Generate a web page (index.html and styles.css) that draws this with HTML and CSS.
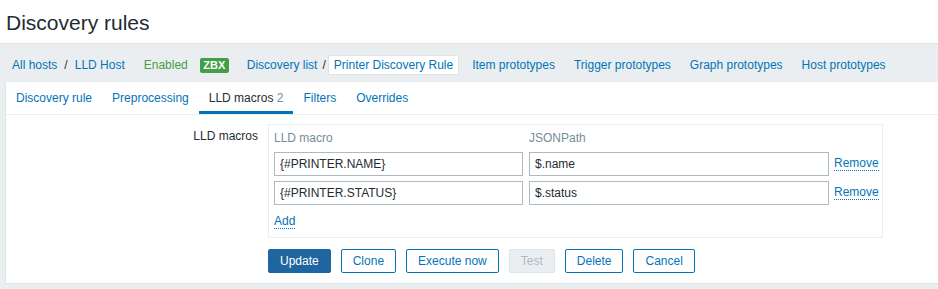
FILE: index.html
```html
<!DOCTYPE html>
<html lang="en">
<head>
<meta charset="utf-8">
<title>Discovery rules</title>
<link rel="stylesheet" href="styles.css">
</head>
<body>
<header class="page-header">
  <h1 class="page-title">Discovery rules</h1>
</header>
<main class="wrapper">
  <nav class="breadcrumbs">
    <a class="link" href="#">All hosts</a>
    <span class="sep">/</span>
    <a class="link" href="#">LLD Host</a>
    <span class="status">Enabled</span>
    <span class="badge">ZBX</span>
    <a class="link crumb-disc" href="#">Discovery list</a>
    <span class="sep sep-tight">/</span>
    <span class="crumb-current">Printer Discovery Rule</span>
    <a class="link nav-item first" href="#">Item prototypes</a>
    <a class="link nav-item" href="#">Trigger prototypes</a>
    <a class="link nav-item" href="#">Graph prototypes</a>
    <a class="link nav-item" href="#">Host prototypes</a>
  </nav>
  <section class="card">
    <ul class="tabs">
      <li class="tab"><a href="#">Discovery rule</a></li>
      <li class="tab"><a href="#">Preprocessing</a></li>
      <li class="tab active"><a href="#">LLD macros <span class="count">2</span></a></li>
      <li class="tab"><a href="#">Filters</a></li>
      <li class="tab"><a href="#">Overrides</a></li>
    </ul>
    <form class="form">
      <div class="form-row">
        <label class="form-label">LLD macros</label>
        <div class="macro-table">
          <div class="macro-grid">
            <div class="col-head">LLD macro</div>
            <div class="col-head">JSONPath</div>
            <div></div>
            <input class="field field-macro" type="text" value="{#PRINTER.NAME}">
            <input class="field field-path" type="text" value="$.name">
            <a class="dotted-link" href="#">Remove</a>
            <input class="field field-macro" type="text" value="{#PRINTER.STATUS}">
            <input class="field field-path" type="text" value="$.status">
            <a class="dotted-link" href="#">Remove</a>
          </div>
          <div class="add-row"><a class="dotted-link" href="#">Add</a></div>
        </div>
      </div>
      <div class="buttons">
        <button type="button" class="btn btn-primary">Update</button>
        <button type="button" class="btn">Clone</button>
        <button type="button" class="btn">Execute now</button>
        <button type="button" class="btn btn-disabled" disabled>Test</button>
        <button type="button" class="btn">Delete</button>
        <button type="button" class="btn">Cancel</button>
      </div>
    </form>
  </section>
</main>
</body>
</html>
```

FILE: styles.css
```css
* { box-sizing: border-box; }

html, body {
  margin: 0;
  padding: 0;
}

body {
  font-family: "Liberation Sans", Arial, sans-serif;
  font-size: 12px;
  color: #1f2c33;
  background: #ebeef0;
}

a { text-decoration: none; }

.page-header {
  background: #ffffff;
  height: 43px;
  padding: 11px 0 0 6px;
}

.page-title {
  margin: 0;
  font-size: 21px;
  font-weight: normal;
  line-height: 24px;
  color: #1f2c33;
}

.wrapper {
  border-top: 1px solid #dfe4e7;
  padding: 0 0 5px 5px;
}

.breadcrumbs {
  display: flex;
  align-items: center;
  padding: 11px 0 7px 7px;
  line-height: 20px;
  white-space: nowrap;
}

.link { color: #0275b8; }

.sep {
  margin: 0 7px;
  color: #1f2c33;
}

.sep-tight { margin: 0 2px 0 5px; }

.status {
  margin-left: 19px;
  color: #429e47;
}

.badge {
  margin-left: 12px;
  height: 15px;
  line-height: 15px;
  padding: 0 3px;
  min-width: 29px;
  text-align: center;
  border-radius: 2px;
  background: #429e47;
  color: #ffffff;
  font-size: 11px;
  font-weight: bold;
}

.crumb-disc { margin-left: 18px; }

.crumb-current {
  height: 20px;
  line-height: 18px;
  padding: 0 5px;
  background: #ffffff;
  border: 1px solid #dfe4e7;
  border-radius: 2px;
  color: #0275b8;
  margin-right: 13px;
}

.nav-item { margin-left: 19px; }
.nav-item.first { margin-left: 0; }

.card {
  background: #ffffff;
  border-left: 1px solid #dfe4e7;
  border-bottom: 1px solid #dfe4e7;
}

.tabs {
  display: flex;
  list-style: none;
  margin: 0;
  padding: 0;
  height: 33px;
  border-bottom: 1px solid #ebeef0;
}

.tab a {
  display: block;
  height: 32px;
  line-height: 32px;
  padding: 0 10px;
  color: #0275b8;
}

.tab.active a {
  color: #1f2c33;
  box-shadow: inset 0 -3px 0 #0275b8;
}

.count { color: #768d99; }

.form {
  padding: 9px 0 10px 0;
}

.form-row {
  display: grid;
  grid-template-columns: 252px 615px;
  column-gap: 10px;
  align-items: start;
}

.form-label {
  text-align: right;
  line-height: 16px;
  padding-top: 4px;
}

.macro-table {
  border: 1px solid #ebeef0;
  padding: 5px 5px 8px 5px;
}

.macro-grid {
  display: grid;
  grid-template-columns: 255px 305px auto;
  row-gap: 5px;
  align-items: center;
}

.col-head {
  color: #768d99;
  line-height: 16px;
  margin-bottom: 1px;
}

.field {
  height: 24px;
  padding: 0 5px;
  border: 1px solid #acbbc2;
  border-radius: 0;
  font-family: "Liberation Sans", Arial, sans-serif;
  font-size: 12px;
  color: #1f2c33;
  background: #ffffff;
  margin: 0;
}

.field-macro { width: 249px; }
.field-path { width: 300px; }

.dotted-link {
  display: inline-block;
  justify-self: start;
  color: #0275b8;
  line-height: 13px;
  border-bottom: 1px dotted #0275b8;
}

.add-row {
  padding-top: 9px;
  line-height: 14px;
}

.buttons {
  display: flex;
  gap: 10px;
  margin: 11px 0 0 262px;
}

.btn {
  height: 24px;
  padding: 0 11px;
  border: 1px solid #0275b8;
  border-radius: 2px;
  background: #ffffff;
  color: #0275b8;
  font-family: "Liberation Sans", Arial, sans-serif;
  font-size: 12px;
  line-height: 22px;
  cursor: pointer;
}

.btn-primary {
  background: #1f65a0;
  border-color: #1f65a0;
  color: #ffffff;
}

.btn-disabled {
  background: #ebeef0;
  border-color: #dfe4e7;
  color: #acbbc2;
  cursor: default;
}
```
